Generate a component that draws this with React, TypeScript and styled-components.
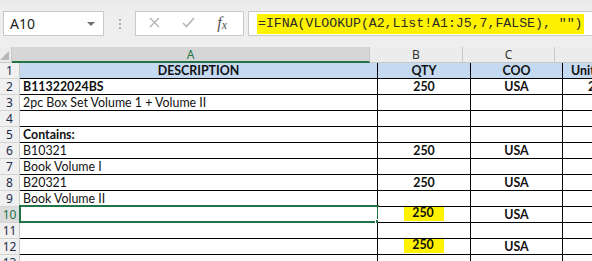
import styled, { createGlobalStyle, css } from "styled-components";

const GlobalStyle = createGlobalStyle`
  html, body {
    margin: 0;
    padding: 0;
    background: #ffffff;
  }
`;

type Align = "left" | "center";

interface CellData {
  text?: string;
  bold?: boolean;
  marker?: boolean;
}

interface RowData {
  num: number;
  cells: CellData[];
  header?: boolean;
  selected?: boolean;
}

const columns: { name: string; width: number; align: Align }[] = [
  { name: "A", width: 358, align: "left" },
  { name: "B", width: 93, align: "center" },
  { name: "C", width: 92, align: "center" },
  { name: "D", width: 100, align: "center" },
];

const rows: RowData[] = [
  {
    num: 1,
    header: true,
    cells: [
      { text: "DESCRIPTION" },
      { text: "QTY" },
      { text: "COO" },
      { text: "Unit Price USD" },
    ],
  },
  {
    num: 2,
    cells: [
      { text: "B11322024BS", bold: true },
      { text: "250", bold: true },
      { text: "USA", bold: true },
      { text: "2,500.00", bold: true },
    ],
  },
  { num: 3, cells: [{ text: "2pc Box Set Volume 1 + Volume II" }] },
  { num: 4, cells: [] },
  { num: 5, cells: [{ text: "Contains:", bold: true }] },
  {
    num: 6,
    cells: [
      { text: "B10321" },
      { text: "250", bold: true },
      { text: "USA", bold: true },
    ],
  },
  { num: 7, cells: [{ text: "Book Volume I" }] },
  {
    num: 8,
    cells: [
      { text: "B20321" },
      { text: "250", bold: true },
      { text: "USA", bold: true },
    ],
  },
  { num: 9, cells: [{ text: "Book Volume II" }] },
  {
    num: 10,
    selected: true,
    cells: [{}, { text: "250", bold: true, marker: true }, { text: "USA", bold: true }],
  },
  { num: 11, cells: [] },
  {
    num: 12,
    cells: [{}, { text: "250", bold: true, marker: true }, { text: "USA", bold: true }],
  },
  { num: 13, cells: [] },
];

export default function App() {
  return (
    <>
      <GlobalStyle />
      <Window>
        <FormulaToolbar>
          <NameBox>
            <span>A10</span>
            <Caret />
          </NameBox>
          <Grip>
            <i />
            <i />
            <i />
          </Grip>
          <ActionBox>
            <svg width="11" height="11" viewBox="0 0 11 11">
              <path d="M1 1 L10 10 M10 1 L1 10" stroke="#b4b4b4" strokeWidth="1.4" fill="none" />
            </svg>
            <svg width="13" height="11" viewBox="0 0 13 11">
              <path d="M1 6 L4.5 9.5 L12 1" stroke="#b4b4b4" strokeWidth="1.6" fill="none" />
            </svg>
            <Fx>
              f<sub>x</sub>
            </Fx>
          </ActionBox>
          <FormulaInput>
            <Highlight>=IFNA(VLOOKUP(A2,List!A1:J5,7,FALSE), "")</Highlight>
          </FormulaInput>
        </FormulaToolbar>

        <Sheet>
          <HeaderRow>
            <Corner>
              <svg width="9" height="9" viewBox="0 0 9 9">
                <path d="M9 0 L9 9 L0 9 Z" fill="#b8b8b8" />
              </svg>
            </Corner>
            {columns.map((c, i) => (
              <ColHeader key={c.name} $width={c.width} $active={i === 0}>
                {c.name}
              </ColHeader>
            ))}
          </HeaderRow>

          {rows.map((r) => (
            <Row key={r.num}>
              <RowNumber $active={r.selected}>{r.num}</RowNumber>
              {columns.map((c, i) => {
                const cell = r.cells[i] || {};
                return (
                  <Cell
                    key={c.name}
                    $width={c.width}
                    $align={c.align}
                    $bold={cell.bold || r.header}
                    $header={r.header}
                  >
                    {cell.marker ? <Marker>{cell.text}</Marker> : cell.text}
                    {r.selected && i === 0 && (
                      <Selection>
                        <FillHandle />
                      </Selection>
                    )}
                  </Cell>
                );
              })}
            </Row>
          ))}
        </Sheet>
      </Window>
    </>
  );
}

const Window = styled.div`
  width: 592px;
  height: 261px;
  overflow: hidden;
  background: #ffffff;
`;

const FormulaToolbar = styled.div`
  height: 47px;
  box-sizing: border-box;
  padding: 11px 0 0 3px;
  display: flex;
  align-items: flex-start;
  background: linear-gradient(#e9e9e9, #eeeeee 12px, #eeeeee);
`;

const boxStyle = css`
  box-sizing: border-box;
  height: 25px;
  background: #ffffff;
  border: 1px solid #c9c9c9;
  display: flex;
  align-items: center;
`;

const NameBox = styled.div`
  ${boxStyle};
  width: 101px;
  padding: 0 8px 0 6px;
  justify-content: space-between;
  font-family: "Noto Sans", "Open Sans", sans-serif;
  font-size: 14px;
  color: #222222;
`;

const Caret = styled.div`
  width: 0;
  height: 0;
  border-left: 4px solid transparent;
  border-right: 4px solid transparent;
  border-top: 4px solid #707070;
`;

const Grip = styled.div`
  width: 31px;
  height: 25px;
  display: flex;
  flex-direction: column;
  align-items: center;
  justify-content: center;
  gap: 2px;
  i {
    width: 2px;
    height: 2px;
    background: #b0b0b0;
  }
`;

const ActionBox = styled.div`
  ${boxStyle};
  width: 109px;
  padding: 0 16px 2px 13px;
  justify-content: space-between;
`;

const Fx = styled.span`
  font-family: "Liberation Serif", serif;
  font-style: italic;
  font-size: 16px;
  color: #555555;
  line-height: 1;
  sub {
    font-size: 12px;
    vertical-align: -1px;
  }
`;

const FormulaInput = styled.div`
  ${boxStyle};
  flex: 1;
  margin-left: 4px;
  border-right: none;
  padding-left: 8px;
  white-space: nowrap;
  overflow: hidden;
`;

const Highlight = styled.span`
  font-family: "Liberation Mono", "DejaVu Sans Mono", monospace;
  font-size: 13.2px;
  line-height: 20px;
  color: #2b2b2b;
  background: #fff200;
  padding: 0 2px 0 1px;
`;

const Sheet = styled.div`
  display: flex;
  flex-direction: column;
  font-family: "Lato", "Liberation Sans", sans-serif;
`;

const HeaderRow = styled.div`
  display: flex;
  height: 16px;
  background: #ececec;
`;

const Corner = styled.div`
  box-sizing: border-box;
  width: 20px;
  height: 16px;
  border-right: 1px solid #c8c8c8;
  border-bottom: 1px solid #c8c8c8;
  display: flex;
  align-items: flex-end;
  justify-content: flex-end;
  padding: 0 2px 2px 0;
`;

const ColHeader = styled.div<{ $width: number; $active?: boolean }>`
  box-sizing: border-box;
  flex: 0 0 ${(p) => p.$width}px;
  height: 16px;
  border-right: 1px solid #c8c8c8;
  border-bottom: 1px solid #c8c8c8;
  display: flex;
  align-items: center;
  justify-content: center;
  font-family: "Noto Sans", "Open Sans", sans-serif;
  font-size: 12px;
  color: #333333;
  ${(p) =>
    p.$active &&
    css`
      background: #d6d6d6;
      color: #217346;
      border-bottom: 2px solid #217346;
    `}
`;

const Row = styled.div`
  display: flex;
  height: 16px;
`;

const RowNumber = styled.div<{ $active?: boolean }>`
  box-sizing: border-box;
  flex: 0 0 20px;
  height: 16px;
  background: #f0f0f0;
  border-right: 1px solid #c8c8c8;
  border-bottom: 1px solid #d4d4d4;
  display: flex;
  align-items: center;
  justify-content: center;
  font-family: "Noto Sans", "Open Sans", sans-serif;
  font-size: 12px;
  color: #1e2a4a;
  ${(p) =>
    p.$active &&
    css`
      background: #dcdcdc;
      color: #217346;
    `}
`;

const Cell = styled.div<{
  $width: number;
  $align: Align;
  $bold?: boolean;
  $header?: boolean;
}>`
  position: relative;
  box-sizing: border-box;
  flex: 0 0 ${(p) => p.$width}px;
  height: 16px;
  border-right: 1px solid #000000;
  border-bottom: 1px solid #000000;
  padding: 0 3px;
  display: flex;
  align-items: center;
  justify-content: ${(p) => (p.$align === "left" && !p.$header ? "flex-start" : "center")};
  font-size: 12.4px;
  line-height: 15px;
  white-space: nowrap;
  color: #111111;
  font-weight: ${(p) => (p.$bold ? 700 : 400)};
  background: ${(p) => (p.$header ? "#c5d9f1" : "#ffffff")};
`;

const Marker = styled.span`
  background: #fff200;
  padding: 0 10px 2px 8px;
  margin-top: -2px;
  line-height: 12px;
`;

const Selection = styled.div`
  position: absolute;
  left: -1px;
  top: -2px;
  right: -2px;
  bottom: -1px;
  border: 2px solid #217346;
`;

const FillHandle = styled.div`
  position: absolute;
  right: -5px;
  bottom: -5px;
  width: 5px;
  height: 5px;
  background: #217346;
  border: 1px solid #ffffff;
`;
